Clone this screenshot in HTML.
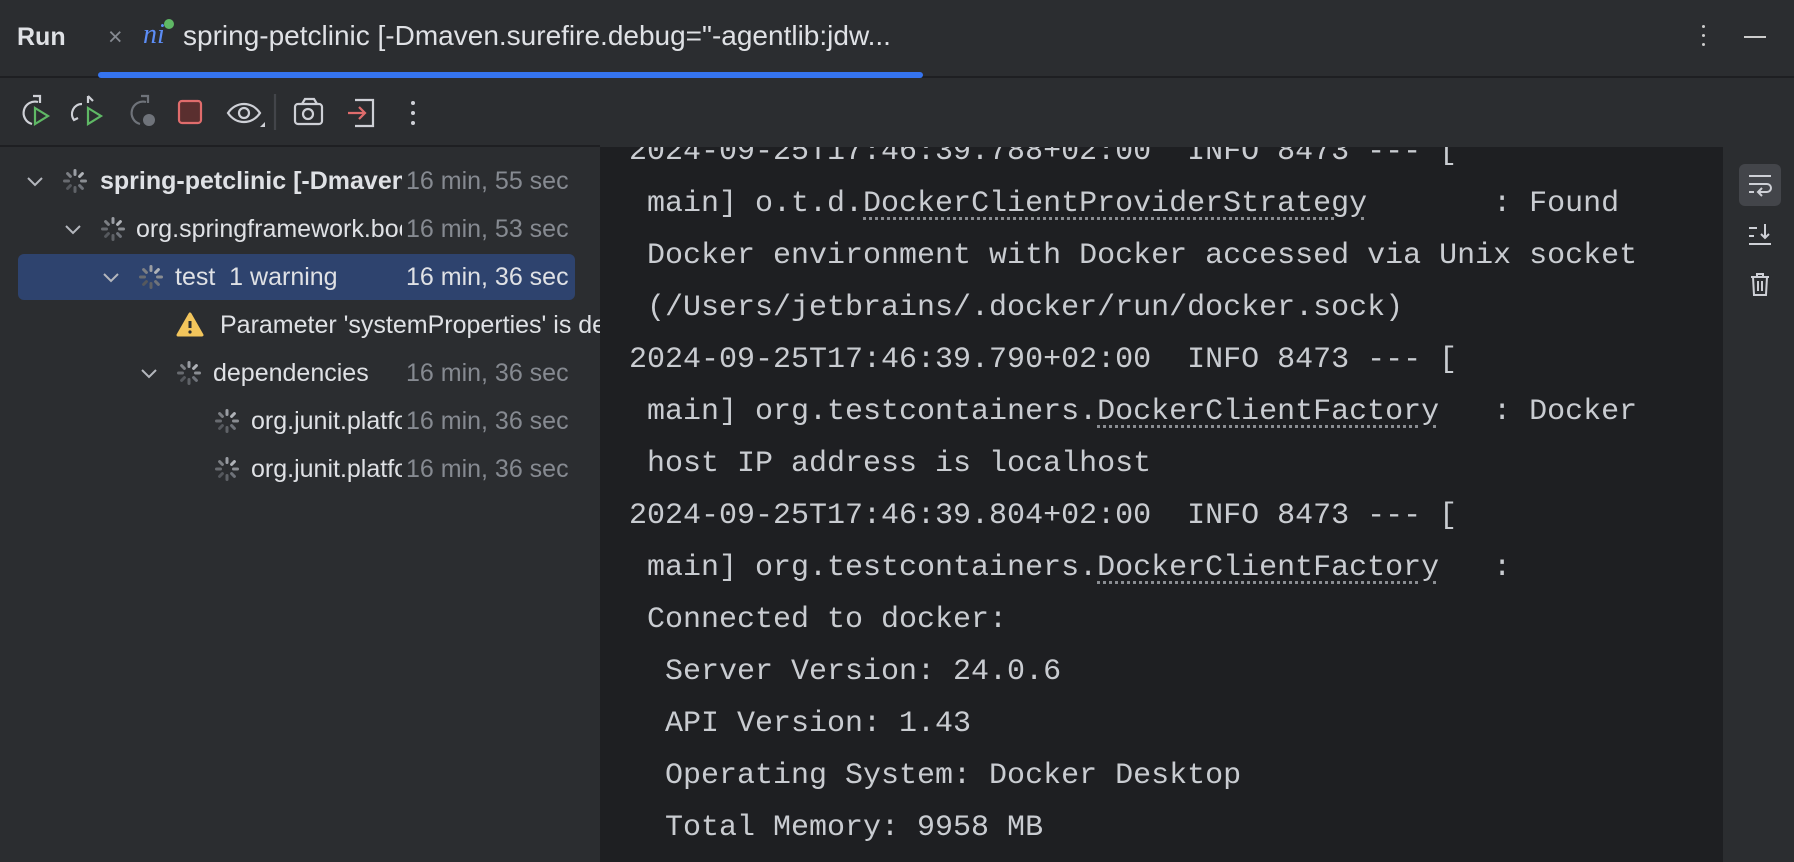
<!DOCTYPE html>
<html><head><meta charset="utf-8"><style>
*{margin:0;padding:0;box-sizing:border-box}
body{width:1794px;height:862px;overflow:hidden;background:#2b2d30;font-family:"Liberation Sans",sans-serif;color:#dfe1e5;position:relative}
.abs{position:absolute}
.t{font-size:25px;white-space:nowrap;line-height:30px}
.gray{color:#868a91}
#tabline{left:0;top:76px;width:1794px;height:2px;background:#1e1f22}
#console{left:600px;top:147px;width:1122px;height:715px;background:#1e1f22;overflow:hidden}
#gutter{left:1722px;top:147px;width:72px;height:715px;background:#2b2d30;border-left:1px solid #1e1f22}
#lines{position:absolute;left:29px;top:-21px;font-family:"Liberation Mono",monospace;font-size:30px;line-height:52px;white-space:pre;color:#c9ccd1}
.u{text-decoration:underline dotted #8a8d92;text-underline-offset:6px}
.row{position:absolute;height:48px;left:0;width:600px}
.row .name{position:absolute;top:9px;overflow:hidden;white-space:nowrap}
.row .time{position:absolute;left:406px;top:9px}
</style></head><body>
<!-- header -->
<div class="abs t" style="left:17px;top:22px;font-weight:bold;font-size:25px">Run</div>
<div class="abs t" style="left:108px;top:22px;color:#868a91;font-size:25px">×</div>
<div class="abs t" style="left:143px;top:20px;color:#5c8df6;font-style:italic;font-size:28px;font-family:'Liberation Serif',serif">ni</div>
<div class="abs" style="left:164px;top:19px;width:10px;height:10px;border-radius:50%;background:#5fb865"></div>
<div class="abs t" style="left:183px;top:21px;font-size:28px">spring-petclinic [-Dmaven.surefire.debug="-agentlib:jdw...</div>
<div class="abs" style="left:1702px;top:25px;width:3px;height:3px;background:#ccc;border-radius:50%;box-shadow:0 9px 0 #ccc,0 18px 0 #ccc"></div>
<div class="abs" style="left:1744px;top:36px;width:22px;height:2px;background:#ccc"></div>
<div id="tabline" class="abs"></div>
<div class="abs" style="left:98px;top:72px;width:825px;height:6px;background:#3574f0;border-radius:3px"></div>
<!-- toolbar -->
<svg class="abs" style="left:0;top:78px" width="600" height="69" viewBox="0 0 600 69" fill="none" stroke-width="2.2">
 <g stroke="#ced0d6"><path d="M38 24a11 11 0 1 0 -6 22"/><path d="M33 18h7v7"/></g>
 <path d="M35 30l13 8-13 8z" stroke="#5fb865"/>
 <g stroke="#ced0d6"><path d="M82 26a10 10 0 0 0 -8 16l4 -2"/><path d="M88 18l5 5"/><path d="M88 18v7"/></g>
 <path d="M88 30l13 8-13 8z" stroke="#5fb865"/>
 <g stroke="#6f737a"><path d="M146 24a11 11 0 1 0 -6 22"/><path d="M141 18h7v7"/></g>
 <circle cx="149" cy="42" r="6" fill="#6f737a"/>
 <rect x="179" y="23" width="22" height="22" rx="3" fill="#5a2f2f" stroke="#e06c6c"/>
 <path d="M228 35c8-12 24-12 32 0c-8 12-24 12-32 0z" stroke="#ced0d6"/><circle cx="244" cy="35" r="5" stroke="#ced0d6"/>
 <path d="M260 49l5-5v5z" fill="#ced0d6"/>
 <path d="M275 16v36" stroke="#43454a"/>
 <rect x="295" y="26" width="27" height="20" rx="3" stroke="#ced0d6"/><path d="M302 26l3-5h9l3 5" stroke="#ced0d6"/><circle cx="308" cy="36" r="5" stroke="#ced0d6"/>
 <path d="M355 22h18v26h-18" stroke="#ced0d6"/><path d="M348 35h16M359 29l6 6-6 6" stroke="#e06c6c"/>
 <g fill="#ced0d6" stroke="none"><circle cx="413" cy="25" r="2"/><circle cx="413" cy="35" r="2"/><circle cx="413" cy="45" r="2"/></g>
</svg>
<div class="abs" style="left:0;top:145px;width:600px;height:2px;background:#1e1f22"></div>
<!-- tree -->
<svg width="0" height="0" style="position:absolute"><defs>
<g id="sp"><g stroke-width="3" stroke-linecap="round">
<path d="M12 1.5v4" stroke="#9a9da3"/><path d="M19.4 4.6l-2.8 2.8" stroke="#b0b3b8"/><path d="M22.5 12h-4" stroke="#8a8d92"/><path d="M19.4 19.4l-2.8-2.8" stroke="#6f737a"/>
<path d="M12 22.5v-4" stroke="#5f6267"/><path d="M4.6 19.4l2.8-2.8" stroke="#55585d"/><path d="M1.5 12h4" stroke="#686b70"/><path d="M4.6 4.6l2.8 2.8" stroke="#7c7f84"/></g></g>
<path id="ch" d="M2 5l7 7 7-7" fill="none" stroke="#b4b7bd" stroke-width="2"/>
</defs></svg>
<div class="abs" style="left:18px;top:254px;width:557px;height:46px;background:#2e436e;border-radius:6px"></div>
<div class="row" style="top:157px">
 <svg class="abs" style="left:26px;top:16px" width="18" height="18"><use href="#ch"/></svg>
 <svg class="abs" style="left:63px;top:12px" width="24" height="24"><use href="#sp"/></svg>
 <div class="name t" style="left:100px;width:302px;font-weight:bold">spring-petclinic [-Dmaven.surefire</div>
 <div class="time t gray">16 min, 55 sec</div></div>
<div class="row" style="top:205px">
 <svg class="abs" style="left:64px;top:16px" width="18" height="18"><use href="#ch"/></svg>
 <svg class="abs" style="left:101px;top:12px" width="24" height="24"><use href="#sp"/></svg>
 <div class="name t" style="left:136px;width:266px">org.springframework.boot</div>
 <div class="time t gray">16 min, 53 sec</div></div>
<div class="row" style="top:253px">
 <svg class="abs" style="left:102px;top:16px" width="18" height="18"><use href="#ch"/></svg>
 <svg class="abs" style="left:139px;top:12px" width="24" height="24"><use href="#sp"/></svg>
 <div class="name t" style="left:175px;width:227px">test&nbsp; 1 warning</div>
 <div class="time t">16 min, 36 sec</div></div>
<div class="row" style="top:301px">
 <svg class="abs" style="left:176px;top:11px" width="28" height="26"><path d="M14 2l12 21H2z" fill="#f2c55c" stroke="#f2c55c" stroke-width="3" stroke-linejoin="round"/><path d="M14 9v7" stroke="#2b2d30" stroke-width="3"/><circle cx="14" cy="20" r="1.6" fill="#2b2d30"/></svg>
 <div class="name t" style="left:220px;width:380px">Parameter 'systemProperties' is deprecated</div></div>
<div class="row" style="top:349px">
 <svg class="abs" style="left:140px;top:16px" width="18" height="18"><use href="#ch"/></svg>
 <svg class="abs" style="left:177px;top:12px" width="24" height="24"><use href="#sp"/></svg>
 <div class="name t" style="left:213px;width:189px">dependencies</div>
 <div class="time t gray">16 min, 36 sec</div></div>
<div class="row" style="top:397px">
 <svg class="abs" style="left:215px;top:12px" width="24" height="24"><use href="#sp"/></svg>
 <div class="name t" style="left:251px;width:151px">org.junit.platform</div>
 <div class="time t gray">16 min, 36 sec</div></div>
<div class="row" style="top:445px">
 <svg class="abs" style="left:215px;top:12px" width="24" height="24"><use href="#sp"/></svg>
 <div class="name t" style="left:251px;width:151px">org.junit.platform</div>
 <div class="time t gray">16 min, 36 sec</div></div>
<!-- console -->
<div id="console" class="abs"><div id="lines">2024-09-25T17:46:39.788+02:00  INFO 8473 --- [
 main] o.t.d.<span class="u">DockerClientProviderStrategy</span>       : Found
 Docker environment with Docker accessed via Unix socket
 (/Users/jetbrains/.docker/run/docker.sock)
2024-09-25T17:46:39.790+02:00  INFO 8473 --- [
 main] org.testcontainers.<span class="u">DockerClientFactory</span>   : Docker
 host IP address is localhost
2024-09-25T17:46:39.804+02:00  INFO 8473 --- [
 main] org.testcontainers.<span class="u">DockerClientFactory</span>   :
 Connected to docker:
  Server Version: 24.0.6
  API Version: 1.43
  Operating System: Docker Desktop
  Total Memory: 9958 MB
</div></div>
<div id="gutter" class="abs"></div>
<div class="abs" style="left:1739px;top:164px;width:42px;height:42px;background:#43454a;border-radius:6px"></div>
<svg class="abs" style="left:1746px;top:171px" width="28" height="130" fill="none" stroke="#ced0d6" stroke-width="2">
 <path d="M3 5h22M3 13h18a4 4 0 0 1 0 8h-8M16 17l-4 4 4 4M3 21h5"/>
 <path d="M3 57h8M3 65h5M3 73h22M19 53v14M15 63l4 4 4-4"/>
 <path d="M5 106h18M11 106v-3h6v3M7 106l1 18h12l1-18M12 110v10M16 110v10"/>
</svg>
</body></html>
